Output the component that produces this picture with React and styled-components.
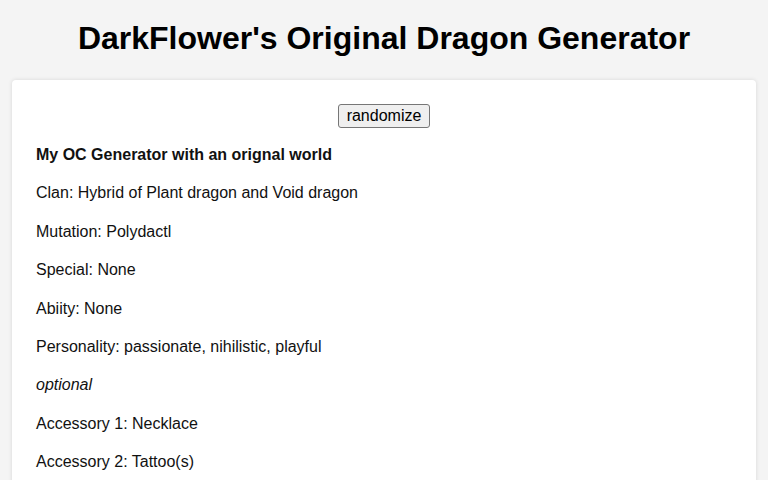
import React, { useState } from 'react';
import styled, { createGlobalStyle } from 'styled-components';

const GlobalStyle = createGlobalStyle`
  body {
    margin: 0;
    background: #f4f4f4;
    font-family: 'Liberation Sans', Arial, sans-serif;
    color: #111;
  }
`;

const Page = styled.div`
  padding: 0 12px;
`;

const Title = styled.h1`
  font-size: 32px;
  font-weight: bold;
  text-align: center;
  margin: 20px 0 23px;
  line-height: 37px;
  color: #000;
`;

const Card = styled.div`
  background: #fff;
  border-radius: 4px;
  box-shadow: 0 0 4px rgba(0, 0, 0, 0.12);
  padding: 24px 24px 24px;
`;

const RandomButton = styled.button`
  display: block;
  margin: 0 auto;
  font-family: 'Liberation Sans', Arial, sans-serif;
  font-size: 16px;
  line-height: 18px;
  padding: 2px 8px;
  background: #efefef;
  border: 1px solid #767676;
  border-radius: 3px;
  color: #000;
  cursor: pointer;
`;

const Lines = styled.div`
  display: flex;
  flex-direction: column;
  gap: 16px;
  padding-top: 16px;
`;

const Line = styled.p`
  margin: 0;
  font-size: 16px;
  line-height: 22.4px;
  font-weight: ${(p) => (p.$bold ? 'bold' : 'normal')};
  font-style: ${(p) => (p.$italic ? 'italic' : 'normal')};
`;

const traits = {
  clan: 'Hybrid of Plant dragon and Void dragon',
  mutation: 'Polydactl',
  special: 'None',
  ability: 'None',
  personality: 'passionate, nihilistic, playful',
  acc1: 'Necklace',
  acc2: 'Tattoo(s)',
};

export default function App() {
  const [data] = useState(traits);

  return (
    <Page>
      <GlobalStyle />
      <Title>DarkFlower's Original Dragon Generator</Title>
      <Card>
        <RandomButton>randomize</RandomButton>
        <Lines>
          <Line $bold>My OC Generator with an orignal world</Line>
          <Line>Clan: {data.clan}</Line>
          <Line>Mutation: {data.mutation}</Line>
          <Line>Special: {data.special}</Line>
          <Line>Abiity: {data.ability}</Line>
          <Line>Personality: {data.personality}</Line>
          <Line $italic>optional</Line>
          <Line>Accessory 1: {data.acc1}</Line>
          <Line>Accessory 2: {data.acc2}</Line>
        </Lines>
      </Card>
    </Page>
  );
}
